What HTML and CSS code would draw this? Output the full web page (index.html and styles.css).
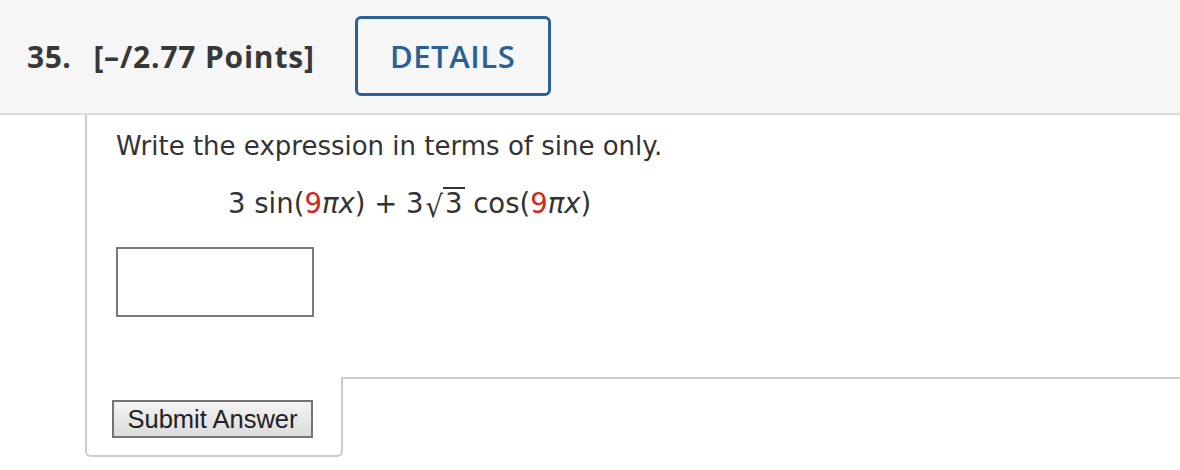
FILE: index.html
```html
<!DOCTYPE html>
<html lang="en">
<head>
<meta charset="utf-8">
<title>Question 35</title>
<link rel="stylesheet" href="styles.css">
</head>
<body>
<header class="q-header">
  <h2 class="q-title"><span class="q-num">35.</span><span class="q-points">[–/2.77 Points]</span></h2>
  <button class="details-btn" type="button">DETAILS</button>
</header>
<main class="q-content">
  <section class="q-body">
    <p class="prompt">Write the expression in terms of sine only.</p>
    <p class="math">3 sin(<span class="red">9</span><i>πx</i>) + 3<span class="sqrt"><span class="rad">√</span><span class="radicand">3</span></span> cos(<span class="red">9</span><i>πx</i>)</p>
    <input class="answer" type="text" aria-label="answer">
  </section>
  <div class="q-footer">
    <div class="submit-cell">
      <button class="submit-btn" type="button">Submit Answer</button>
    </div>
    <div class="footer-rest"></div>
  </div>
</main>
</body>
</html>
```
FILE: styles.css
```css
* { box-sizing: border-box; }
html, body { margin: 0; padding: 0; background: #fff; }
body { width: 1180px; height: 470px; overflow: hidden; }

.q-header {
  height: 115px;
  background: #f6f6f6;
  border-bottom: 2px solid #dedede;
  display: flex;
  align-items: center;
  padding-left: 27px;
}
.q-title {
  margin: 0;
  font-family: "Open Sans", sans-serif;
  font-weight: 700;
  font-size: 30px;
  color: #383838;
  display: flex;
  align-items: baseline;
}
.q-num { margin-right: 22px; letter-spacing: 0.5px; }
.q-points { letter-spacing: 0.8px; }
.details-btn {
  margin-left: 40px;
  margin-top: -2px;
  width: 196px;
  height: 80px;
  border: 3px solid #2b6196;
  border-radius: 6px;
  background: transparent;
  color: #2a6195;
  font-family: "Open Sans", sans-serif;
  font-weight: 600;
  font-size: 31px;
  letter-spacing: 0.6px;
  padding: 0;
}

.q-content { margin-left: 85px; }
.q-body {
  border-left: 2px solid #cccccc;
  padding: 16px 0 60px 29px;
  font-family: "DejaVu Sans", Verdana, sans-serif;
  color: #333;
}
.prompt {
  margin: 0;
  font-size: 26px;
  line-height: 30px;
}
.math {
  margin: 25px 0 0 112px;
  font-size: 27.5px;
  line-height: 34px;
  white-space: nowrap;
}
.math i { font-style: italic; }
.red { color: #d1281c; }
.sqrt { display: inline-block; margin-left: 2px; }
.rad { display: inline-block; transform: translateY(3px) scaleY(1.1); }
.radicand {
  border-top: 2px solid #333;
  padding: 0 2px;
  line-height: 28px;
  display: inline-block;
}
.answer {
  display: block;
  margin-top: 27px;
  width: 198px;
  height: 70px;
  border: 2px solid #7a7a7a;
  background: #fff;
}

.q-footer { display: flex; }
.submit-cell {
  width: 258px;
  border: 2px solid #cccccc;
  border-top: none;
  border-radius: 0 0 6px 6px;
  padding: 23px 0 17px 25px;
}
.submit-btn {
  display: block;
  width: 201px;
  height: 38px;
  border: 2px solid #747474;
  background: linear-gradient(#f3f3f3, #dcdcdc);
  font-family: "Liberation Sans", Arial, sans-serif;
  font-size: 25.5px;
  color: #222;
  padding: 0;
  line-height: 34px;
}
.footer-rest {
  flex: 1;
  border-top: 2px solid #cccccc;
}
```
